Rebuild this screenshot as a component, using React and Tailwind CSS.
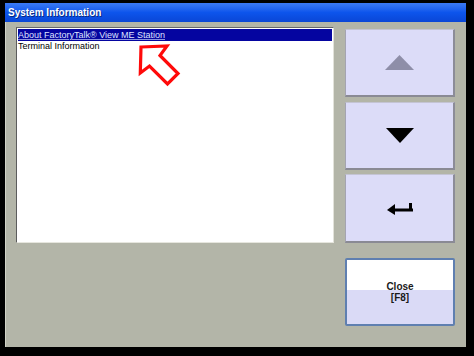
import React from "react";

const faceBtn =
  "w-full flex items-center justify-center bg-[#dcdcf8] border-t border-l border-t-[#c4c4d4] border-l-[#a4a4b0] border-r-2 border-b-2 border-r-[#8c8c98] border-b-[#8a8a94]";

const ArrowOverlay = () => (
  // red hollow arrow pointing at the first list entry
  <svg
    className="absolute left-0 top-0 pointer-events-none"
    width="474"
    height="356"
    viewBox="0 0 474 356"
  >
    <polygon
      points="141,47 167,46 160,55.5 178,73.5 167.5,84 149.5,66 140.3,73"
      fill="#ffffff"
      stroke="#ff0a0a"
      strokeWidth="3.2"
      strokeLinejoin="miter"
    />
  </svg>
);

export default function App() {
  return (
    <div
      className="relative w-[474px] h-[356px] bg-black pt-[3px] pl-[5px] pr-[8px] pb-[9px]"
      style={{ fontFamily: '"Liberation Sans", Arial, sans-serif' }}
    >
      <div className="flex flex-col w-full h-full">
        {/* title bar */}
        <div className="h-[19px] flex items-center pl-[3px] bg-gradient-to-b from-[#3b7af4] via-[#0d55ec] to-[#0a46d6]">
          <span className="text-white text-[10px] font-bold leading-none [text-shadow:1px_1px_0_#0a2a80]">
            System Information
          </span>
        </div>

        {/* body */}
        <div className="flex-1 flex bg-[#b3b5a8] pl-[10px] pt-[5px] border-l border-l-[#d0d2c6]">
          {/* list */}
          <div className="w-[318px] h-[216px] bg-white border-l border-t border-l-[#5c5c5c] border-t-[#6a6a6a] border-r border-b border-r-[#e2e2da] border-b-[#e6e6de] pt-[1px] pl-[1px] pr-[1px]">
            <div className="h-[12px] bg-[#0505a0] text-[#dfe4ff] text-[9px] leading-[12px] underline decoration-[#8c94e0] underline-offset-1">
              About FactoryTalk® View ME Station
            </div>
            <div className="h-[11px] text-black text-[9px] leading-[11px]">
              Terminal Information
            </div>
          </div>

          {/* buttons */}
          <div className="w-[110px] ml-[11px] mt-[2px] flex flex-col">
            <div className={faceBtn + " h-[68px]"}>
              <svg width="29" height="15" viewBox="0 0 29 15">
                <polygon points="14.5,0 29,15 0,15" fill="#8e8ea8" />
              </svg>
            </div>
            <div className={faceBtn + " h-[68px] mt-[5px]"}>
              <svg width="28" height="15" viewBox="0 0 28 15">
                <polygon points="0,0 28,0 14,15" fill="#000000" />
              </svg>
            </div>
            <div className={faceBtn + " h-[69px] mt-[4px]"}>
              <svg width="26" height="13" viewBox="0 0 26 13">
                <polygon points="0,8 8,2 8,13" fill="#000000" />
                <rect x="7" y="6.5" width="19" height="3" fill="#000000" />
                <rect x="22" y="1" width="3" height="8" fill="#000000" />
              </svg>
            </div>
            <div className="h-[68px] mt-[15px] rounded-[2px] border-2 border-[#5f7fb0] flex flex-col overflow-hidden relative">
              <div className="h-[30px] bg-white" />
              <div className="flex-1 bg-[#dadaf6]" />
              <div className="absolute inset-0 flex flex-col items-center justify-center text-[#1a1a1a] text-[10px] leading-[11px] font-bold">
                <span>Close</span>
                <span>[F8]</span>
              </div>
            </div>
          </div>
        </div>
      </div>
      <ArrowOverlay />
    </div>
  );
}
